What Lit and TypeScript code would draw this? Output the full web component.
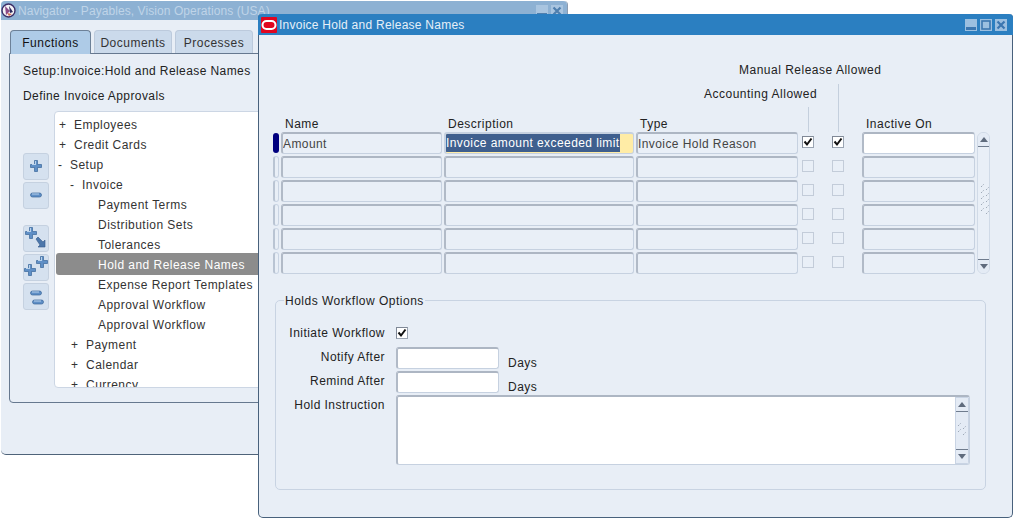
import { LitElement, html, css, svg } from 'lit';
import { customElement } from 'lit/decorators.js';

const tree = [
  { label: 'Employees', mark: '+', markX: 4, textX: 19 },
  { label: 'Credit Cards', mark: '+', markX: 4, textX: 19 },
  { label: 'Setup', mark: '-', markX: 3, textX: 15 },
  { label: 'Invoice', mark: '-', markX: 15, textX: 27 },
  { label: 'Payment Terms', mark: '', markX: 43, textX: 43 },
  { label: 'Distribution Sets', mark: '', markX: 43, textX: 43 },
  { label: 'Tolerances', mark: '', markX: 43, textX: 43 },
  { label: 'Hold and Release Names', mark: '', markX: 43, textX: 43, selected: true },
  { label: 'Expense Report Templates', mark: '', markX: 43, textX: 43 },
  { label: 'Approval Workflow', mark: '', markX: 43, textX: 43 },
  { label: 'Approval Workflow', mark: '', markX: 43, textX: 43 },
  { label: 'Payment', mark: '+', markX: 16, textX: 31 },
  { label: 'Calendar', mark: '+', markX: 16, textX: 31 },
  { label: 'Currency', mark: '+', markX: 16, textX: 31 },
];

const plus = (x: number, y: number) => svg`
  <path d="M${x - 1.5} ${y - 5.5}h3v4h4v3h-4v4h-3v-4h-4v-3h4z" fill="#5f8fc6" stroke="#3a659a" stroke-width=".7" stroke-linejoin="round"/>
  <path d="M${x - 1} ${y - 5}h1v4h-4v-1h3z" fill="#b9d2ec"/>`;
const minus = (x: number, y: number) => svg`
  <rect x=${x - 5.5} y=${y - 2} width="11" height="4" rx="2" fill="#5f8fc6" stroke="#3a659a" stroke-width=".7"/>
  <path d="M${x - 4} ${y - 1}h7" stroke="#b9d2ec" stroke-width="1"/>`;

const toolIcons = [
  plus(12, 12),
  minus(12, 12),
  svg`${plus(7, 7)}<path d="M12 13l2-2 5 5 2-2v7h-7l2-2z" fill="#4c77ab" stroke="#34598a" stroke-width=".6"/>`,
  svg`${plus(6, 15)}${plus(18, 7)}`,
  svg`${minus(12, 9)}${minus(14, 18)}`,
];

@customElement('app-root')
export class AppRoot extends LitElement {
  static styles = css`
    :host {
      display: block;
      position: relative;
      width: 1014px;
      height: 530px;
      overflow: hidden;
      background: #fff;
      font-family: 'Liberation Sans', Arial, sans-serif;
      font-size: 12px;
      letter-spacing: 0.5px;
      color: #222;
    }

    .window {
      position: absolute;
      box-sizing: border-box;
      display: flex;
      flex-direction: column;
      background: #e8eef6;
      border-radius: 4px 4px 5px 5px;
    }

    .navigator {
      left: 1px;
      top: 1px;
      width: 567px;
      height: 454px;
      border-bottom: 1px solid #4f6379;
      border-right: 1px solid #8b9bb0;
    }

    .main {
      left: 258px;
      top: 14px;
      width: 755px;
      height: 504px;
      border: 1px solid #48617c;
      border-top: 0;
    }

    .titlebar {
      flex: none;
      display: flex;
      align-items: center;
      box-sizing: border-box;
      border-radius: 4px 4px 0 0;
    }

    .navigator .titlebar {
      height: 19px;
      background: #8db1d3;
      color: #bfd4e8;
      padding: 0 4px 0 0;
      letter-spacing: 0.07px;
    }

    .main .titlebar {
      height: 21px;
      background: #2b7fc1;
      color: #e6eff8;
      margin: 0 -1px;
      padding: 0 6px 0 3px;
      gap: 2px;
      letter-spacing: 0.25px;
    }

    .main .title-text {
      padding-top: 1px;
    }

    .title-text {
      flex: 1;
      white-space: nowrap;
    }

    .navigator .title-text {
      margin-left: 2px;
    }

    .win-btns {
      display: flex;
      gap: 3px;
    }

    .win-btns svg {
      display: block;
    }

    .tabs {
      display: flex;
      gap: 3px;
      padding: 10px 0 0 9px;
      height: 23px;
      box-sizing: content-box;
    }

    .tab {
      box-sizing: border-box;
      width: 78px;
      height: 23px;
      padding-top: 1px;
      display: flex;
      align-items: center;
      justify-content: center;
      background: #cbdaeb;
      border: 1px solid #bccadc;
      border-bottom: 0;
      border-radius: 4px 4px 0 0;
      color: #333;
    }

    .tab.active {
      width: 81px;
      height: 24px;
      position: relative;
      z-index: 1;
      background: #aecbe7;
      border-color: #6d8198;
      border-bottom: 0;
      color: #111;
    }

    .panel {
      box-sizing: border-box;
      height: 350px;
      margin: 0 2px 0 8px;
      border: 1px solid #66788f;
      border-radius: 0 0 4px 4px;
      display: flex;
      flex-direction: column;
      background: #e8eef6;
    }

    .crumb {
      height: 25px;
      padding-left: 13px;
      display: flex;
      align-items: center;
      white-space: nowrap;
      letter-spacing: 0.41px;
    }

    .crumb:first-child {
      margin-top: 4px;
    }

    .navbody {
      display: flex;
      margin-top: 3px;
    }

    .tools {
      width: 44px;
      box-sizing: border-box;
      padding: 42px 0 0 13px;
      display: flex;
      flex-direction: column;
      gap: 2px;
    }

    .tool {
      box-sizing: border-box;
      width: 26px;
      height: 27px;
      background: #d5e1ef;
      border: 1px solid #c5d1e0;
      border-radius: 3px;
    }

    .tool svg {
      display: block;
    }

    .tool.sep {
      margin-top: 14px;
    }

    .tree {
      flex: 1;
      height: 277px;
      overflow: hidden;
      box-sizing: border-box;
      padding-top: 3px;
      background: #fff;
      border: 1px solid #ccd6e4;
      border-radius: 4px 0 0 4px;
      color: #333;
      letter-spacing: 0.46px;
    }

    .node {
      display: flex;
      align-items: center;
      height: 20px;
      white-space: nowrap;
    }

    .node.selected {
      height: 22px;
      margin: -2px 0 0 1px;
      padding-top: 2px;
      box-sizing: border-box;
      background: #8c8c8c;
      color: #fff;
      border-radius: 3px 0 0 3px;
    }

    .body {
      flex: 1;
      padding: 23px 0 0 14px;
      display: flex;
      flex-direction: column;
    }

    .grid {
      display: grid;
      grid-template-columns: 6px 161px 190px 162px 16px 10px 16px 12px 113px 13px;
      column-gap: 2px;
    }

    .head {
      grid-template-rows: 24px 24px 26px;
    }

    .span {
      grid-column: 1 / -1;
      white-space: nowrap;
    }

    .manual {
      grid-row: 1;
      padding-left: 466px;
      line-height: 24px;
    }

    .accounting {
      grid-row: 2;
      padding-left: 431px;
      line-height: 24px;
    }

    .tick {
      width: 1px;
      background: #c4cfdd;
      justify-self: center;
    }

    .tick.a {
      grid-column: 5;
      grid-row: 3;
      margin-top: 1px;
    }

    .tick.m {
      grid-column: 7;
      grid-row: 2 / 4;
      margin-top: 2px;
    }

    .col {
      grid-row: 3;
      align-self: end;
      line-height: 16px;
      padding-left: 4px;
      white-space: nowrap;
    }

    .rows {
      grid-auto-rows: 22px;
      row-gap: 2px;
    }

    .field {
      box-sizing: border-box;
      background: #e9eff7;
      border: 1px solid #c6d1e0;
      border-top: 2px solid #adb6c3;
      border-left: 2px solid #b1bac7;
      border-radius: 3px;
      line-height: 20px;
      letter-spacing: 0.42px;
      white-space: nowrap;
      overflow: hidden;
      color: #444;
    }

    .field.white {
      background: #fff;
    }

    .field.focus {
      background: #ffeca6;
      color: #fff;
      border-color: #c6d1e0;
    }

    .field.focus span {
      background: #3f5f8e;
      display: inline-block;
      vertical-align: top;
      line-height: 18px;
    }

    .marker {
      box-sizing: border-box;
      border: 1px solid #c9d4e3;
      border-left: 2px solid #b9c4d3;
      border-radius: 3px;
      background: #e9eff7;
    }

    .marker.on {
      background: #00007f;
      border: 0;
      margin: 1px 0;
    }

    .cb {
      box-sizing: border-box;
      width: 12px;
      height: 12px;
      margin-top: 4px;
      justify-self: center;
      border: 1px solid #c3ccd9;
      background: #e9eff7;
    }

    .cb.on {
      border-color: #9aa4b2;
      border-top-color: #7f8896;
      border-left-color: #7f8896;
      background: #fff;
    }

    .cb svg {
      display: block;
    }

    .scroll {
      box-sizing: border-box;
      display: flex;
      flex-direction: column;
      border: 1px solid #d0dae7;
      border-radius: 6px;
      background: #e9eff7;
    }

    .scroll.table {
      grid-column: 10;
      grid-row: 1 / span 6;
    }

    .scroll.text {
      width: 14px;
      height: 100%;
      border-radius: 0;
      border: 1px solid #c9d4e4;
      background: #e4ebf5;
    }

    .sbtn {
      flex: none;
      height: 13px;
      display: flex;
      align-items: center;
      justify-content: center;
      background: #e4ebf5;
    }

    .sbtn.up {
      border-bottom: 1px solid #6f7c8e;
      border-radius: 6px 6px 0 0;
    }

    .sbtn.down {
      border-top: 1px solid #6f7c8e;
      border-radius: 0 0 6px 6px;
    }

    .arrow {
      width: 0;
      height: 0;
      border-left: 4px solid transparent;
      border-right: 4px solid transparent;
    }

    .up .arrow {
      border-bottom: 5px solid #5f6b7d;
    }

    .down .arrow {
      border-top: 5px solid #5f6b7d;
    }

    .track {
      flex: 1;
      display: flex;
      align-items: center;
      justify-content: center;
    }

    .track svg {
      display: block;
    }

    .table .track {
      padding-left: 1px;
      justify-content: flex-end;
      margin-right: -1px;
    }

    .table .track svg {
      margin-top: -4px;
    }

    .group {
      box-sizing: border-box;
      width: 711px;
      height: 198px;
      margin: 18px 0 0 2px;
      padding: 0;
      border: 1px solid #c8d3e2;
      border-radius: 5px;
    }

    .group legend {
      margin-left: 8px;
      padding: 2px 1px 0;
      line-height: 14px;
    }

    .form {
      display: grid;
      grid-template-columns: 109px 103px 1fr;
      grid-template-rows: 22px 22px 22px 70px;
      column-gap: 11px;
      row-gap: 2px;
      padding: 15px 0 0 0;
      letter-spacing: 0.46px;
    }

    .label {
      text-align: right;
      line-height: 20px;
      white-space: nowrap;
    }

    .form .cb {
      justify-self: start;
      margin-top: 4px;
    }

    .days {
      padding-top: 8px;
      line-height: 16px;
      margin-left: -2px;
    }

    .hold {
      grid-column: 2 / -1;
      width: 574px;
      display: flex;
      justify-content: flex-end;
    }
  `;

  private titleBtn(kind: string, dim: boolean) {
    const bg = dim ? '#a9c5e0' : '#9bbfe0';
    const fg = dim ? '#4f7fae' : '#3b76b0';
    return html`<svg width="12" height="12" viewBox="0 0 12 12">
      <rect width="12" height="12" fill=${bg} />
      ${kind === 'min' ? svg`<rect x="1" y="8" width="10" height="3" fill=${fg} />` : ''}
      ${kind === 'max' ? svg`<rect x="2" y="2" width="8" height="8" fill="none" stroke=${fg} stroke-width="1.6" />` : ''}
      ${kind === 'close' ? svg`<path d="M2.5 2.5l7 7M9.5 2.5l-7 7" stroke=${fg} stroke-width="2.2" />` : ''}
    </svg>`;
  }

  private check() {
    return html`<svg width="10" height="10" viewBox="0 0 10 10">
      <path d="M1.5 4.5l2.5 3 4.5-6" fill="none" stroke="#111" stroke-width="2" />
    </svg>`;
  }

  private grip(count: number) {
    const marks = [];
    for (let i = 0; i < count; i++) {
      marks.push(svg`<path d=${`M${1 + (i % 2) * 5} ${3 + i * 3}l3 -3`} stroke="#8d98a8" stroke-width=".8" stroke-dasharray="1.4 1" />`);
    }
    return html`<svg width="10" height=${count * 3 + 4} viewBox="0 0 10 ${count * 3 + 4}">${marks}</svg>`;
  }

  private scrollbar(cls: string, grips: number) {
    return html`<div class="scroll ${cls}">
      <div class="sbtn up"><div class="arrow"></div></div>
      <div class="track">${this.grip(grips)}</div>
      <div class="sbtn down"><div class="arrow"></div></div>
    </div>`;
  }

  private row(first: boolean) {
    return html`
      <div class="marker ${first ? 'on' : ''}"></div>
      <div class="field">${first ? 'Amount' : ''}</div>
      <div class="field ${first ? 'focus' : ''}">${first ? html`<span>Invoice amount exceeded limit</span>` : ''}</div>
      <div class="field">${first ? 'Invoice Hold Reason' : ''}</div>
      <div class="cb ${first ? 'on' : ''}">${first ? this.check() : ''}</div>
      <div></div>
      <div class="cb ${first ? 'on' : ''}">${first ? this.check() : ''}</div>
      <div></div>
      <div class="field ${first ? 'white' : ''}"></div>
    `;
  }

  render() {
    return html`
      <div class="window navigator">
        <div class="titlebar">
          <svg width="15" height="15" viewBox="0 0 15 15">
            <circle cx="7.5" cy="7.5" r="6.5" fill="#f4f2f6" stroke="#3b2d66" stroke-width="1.4" />
            <path d="M4 3l5 5-4 4z" fill="#8a4a86" />
            <path d="M8 3l4 6-3 1z" fill="#2c2a5c" />
            <path d="M6 10l5 1-3 2z" fill="#d06a50" />
          </svg>
          <span class="title-text">Navigator - Payables, Vision Operations (USA)</span>
          <div class="win-btns">${this.titleBtn('min', true)}${this.titleBtn('close', true)}</div>
        </div>
        <div class="tabs">
          <div class="tab active">Functions</div>
          <div class="tab">Documents</div>
          <div class="tab">Processes</div>
        </div>
        <div class="panel">
          <div class="crumb">Setup:Invoice:Hold and Release Names</div>
          <div class="crumb">Define Invoice Approvals</div>
          <div class="navbody">
            <div class="tools">
              ${toolIcons.map(
                (icon, i) => html`<div class="tool ${i === 2 ? 'sep' : ''}">
                  <svg width="24" height="25" viewBox="0 0 24 25">${icon}</svg>
                </div>`
              )}
            </div>
            <div class="tree">
              ${tree.map(
                n => html`<div class="node ${n.selected ? 'selected' : ''}" style="padding-left:${n.markX - (n.selected ? 1 : 0)}px">
                  <span style="width:${n.textX - n.markX}px">${n.mark}</span><span>${n.label}</span>
                </div>`
              )}
            </div>
          </div>
        </div>
      </div>

      <div class="window main">
        <div class="titlebar">
          <svg width="16" height="16" viewBox="0 0 16 16">
            <rect width="16" height="16" rx="1" fill="#e0061f" />
            <rect x="1.5" y="4" width="13" height="8" rx="4" fill="none" stroke="#fff" stroke-width="2" />
          </svg>
          <span class="title-text">Invoice Hold and Release Names</span>
          <div class="win-btns">${this.titleBtn('min', false)}${this.titleBtn('max', false)}${this.titleBtn('close', false)}</div>
        </div>
        <div class="body">
          <div class="grid head">
            <div class="span manual">Manual Release Allowed</div>
            <div class="span accounting">Accounting Allowed</div>
            <div class="tick m"></div>
            <div class="tick a"></div>
            <div class="col" style="grid-column:2">Name</div>
            <div class="col" style="grid-column:3">Description</div>
            <div class="col" style="grid-column:4">Type</div>
            <div class="col" style="grid-column:9">Inactive On</div>
          </div>
          <div class="grid rows">
            ${[0, 1, 2, 3, 4, 5].map(i => this.row(i === 0))}
            ${this.scrollbar('table', 10)}
          </div>
          <fieldset class="group">
            <legend>Holds Workflow Options</legend>
            <div class="form">
              <div class="label">Initiate Workflow</div>
              <div class="cb on">${this.check()}</div>
              <div></div>
              <div class="label">Notify After</div>
              <div class="field white"></div>
              <div class="days">Days</div>
              <div class="label">Remind After</div>
              <div class="field white"></div>
              <div class="days">Days</div>
              <div class="label">Hold Instruction</div>
              <div class="field white hold">${this.scrollbar('text', 4)}</div>
            </div>
          </fieldset>
        </div>
      </div>
    `;
  }
}
